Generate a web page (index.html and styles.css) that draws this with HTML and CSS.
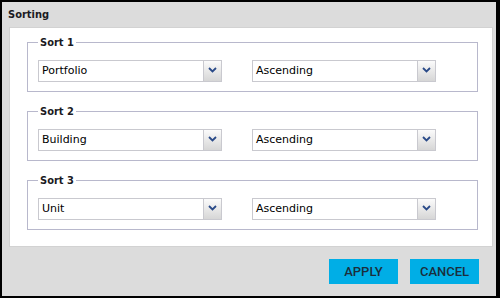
FILE: index.html
```html
<!DOCTYPE html>
<html>
<head>
<meta charset="utf-8">
<link rel="stylesheet" href="styles.css">
</head>
<body>
<div class="dialog">
  <div class="title">Sorting</div>
  <div class="panel">
    <fieldset class="group">
      <legend>Sort 1</legend>
      <div class="row">
        <div class="select"><span class="value">Portfolio</span><span class="arrow"><svg width="9" height="6" viewBox="0 0 9 6"><polyline points="1,1 4.5,4.5 8,1" fill="none" stroke="#2a4a88" stroke-width="1.8"/></svg></span></div>
        <div class="select"><span class="value">Ascending</span><span class="arrow"><svg width="9" height="6" viewBox="0 0 9 6"><polyline points="1,1 4.5,4.5 8,1" fill="none" stroke="#2a4a88" stroke-width="1.8"/></svg></span></div>
      </div>
    </fieldset>
    <fieldset class="group">
      <legend>Sort 2</legend>
      <div class="row">
        <div class="select"><span class="value">Building</span><span class="arrow"><svg width="9" height="6" viewBox="0 0 9 6"><polyline points="1,1 4.5,4.5 8,1" fill="none" stroke="#2a4a88" stroke-width="1.8"/></svg></span></div>
        <div class="select"><span class="value">Ascending</span><span class="arrow"><svg width="9" height="6" viewBox="0 0 9 6"><polyline points="1,1 4.5,4.5 8,1" fill="none" stroke="#2a4a88" stroke-width="1.8"/></svg></span></div>
      </div>
    </fieldset>
    <fieldset class="group">
      <legend>Sort 3</legend>
      <div class="row">
        <div class="select"><span class="value">Unit</span><span class="arrow"><svg width="9" height="6" viewBox="0 0 9 6"><polyline points="1,1 4.5,4.5 8,1" fill="none" stroke="#2a4a88" stroke-width="1.8"/></svg></span></div>
        <div class="select"><span class="value">Ascending</span><span class="arrow"><svg width="9" height="6" viewBox="0 0 9 6"><polyline points="1,1 4.5,4.5 8,1" fill="none" stroke="#2a4a88" stroke-width="1.8"/></svg></span></div>
      </div>
    </fieldset>
  </div>
  <div class="footer">
    <button class="btn">APPLY</button>
    <button class="btn">CANCEL</button>
  </div>
</div>
</body>
</html>
```
FILE: styles.css
```css
html, body {
  margin: 0;
  padding: 0;
  background: #ffffff;
}
.dialog {
  box-sizing: border-box;
  width: 500px;
  height: 298px;
  border: 2px solid #000;
  border-right-width: 4px;
  background: #dcdcdc;
  display: flex;
  flex-direction: column;
  font-family: "DejaVu Sans", Verdana, sans-serif;
}
.title {
  height: 25px;
  line-height: 25px;
  padding-left: 6px;
  font-family: "DejaVu Sans Condensed", "DejaVu Sans", sans-serif;
  font-stretch: condensed;
  font-weight: bold;
  font-size: 11px;
  color: #1a1a22;
}
.panel {
  box-sizing: border-box;
  height: 220px;
  margin: 0 3px 0 7px;
  background: #fff;
  border: 1px solid #d2d2d2;
  padding: 8px 14px 0 17px;
  display: flex;
  flex-direction: column;
  gap: 13px;
}
.group {
  margin: 0;
  padding: 11px 10px 9px 10px;
  border: 1px solid #b8b8cc;
  min-width: 0;
}
.group legend {
  padding: 0 2px;
  margin: 0;
  height: 13px;
  line-height: 13px;
  font-family: "DejaVu Sans Condensed", "DejaVu Sans", sans-serif;
  font-stretch: condensed;
  font-weight: bold;
  font-size: 11px;
  color: #1a1a22;
}
.row {
  display: flex;
  gap: 30px;
}
.select {
  box-sizing: border-box;
  width: 184px;
  height: 22px;
  border: 1px solid #c9c9cf;
  display: flex;
  align-items: stretch;
  background: #fff;
}
.value {
  flex: 1;
  padding-left: 3px;
  font-size: 11px;
  line-height: 20px;
  color: #000;
}
.arrow {
  width: 17px;
  border-left: 1px solid #c9c9cf;
  background: linear-gradient(#fbfbfb, #d6d6d6);
  display: flex;
  align-items: center;
  justify-content: center;
}
.arrow svg {
  display: block;
  margin-top: -2px;
}
.footer {
  display: flex;
  justify-content: flex-end;
  gap: 12px;
  padding: 12px 17px 0 0;
}
.btn {
  width: 69px;
  height: 25px;
  border: none;
  margin: 0;
  padding: 0;
  background: #00aee6;
  font-family: Roboto, "Liberation Sans", sans-serif;
  font-weight: 500;
  font-size: 13px;
  color: #1b2e3c;
}
```
